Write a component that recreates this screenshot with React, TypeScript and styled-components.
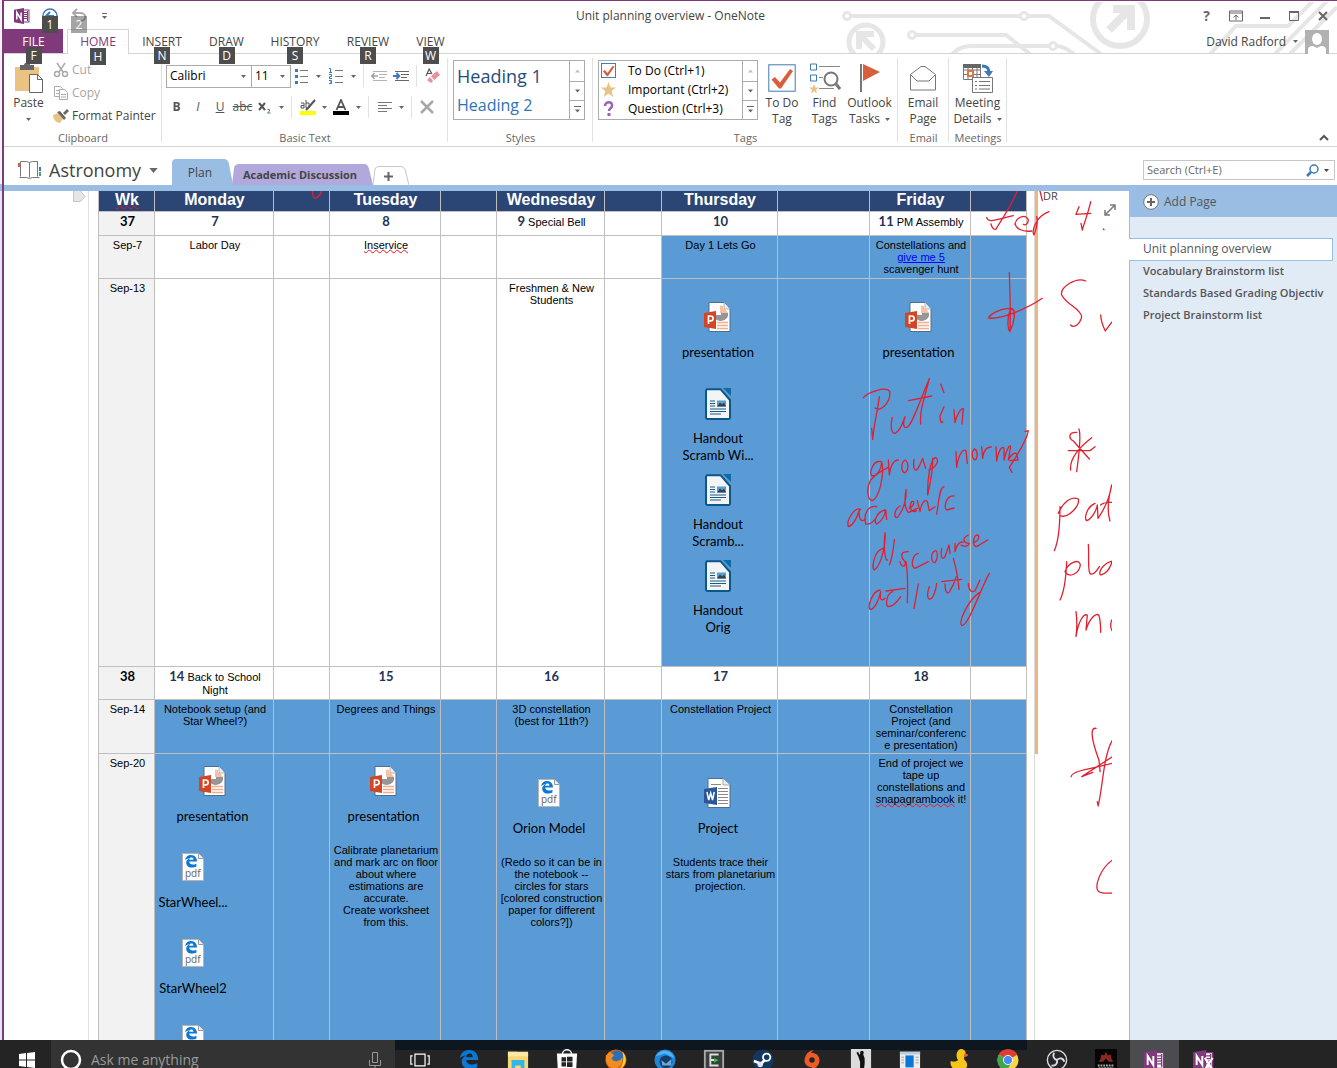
import React from "react";
import styled, { createGlobalStyle, css } from "styled-components";

const UI = '"Open Sans", "Noto Sans", sans-serif';
const DOC = '"Liberation Sans", Arial, sans-serif';
const NOTE = 'Lato, "Open Sans", sans-serif';
const BLUE = "#9abde3";
const PURPLE = "#80397b";

const GlobalStyle = createGlobalStyle`
  * { box-sizing: border-box; }
  body { margin: 0; overflow: hidden; background: #fff; }
  button, input, select { font: inherit; color: inherit; margin: 0; padding: 0; border: 0; background: none; }
  svg { display: block; flex: none; }
`;

const Screen = styled.div`
  display: flex;
  flex-direction: column;
  height: 100vh;
  font: 12px/16px ${UI};
  color: #444;
`;
const Desktop = styled.div`
  flex: 1;
  min-height: 0;
  display: flex;
`;
const BehindStrip = styled.div`
  width: 2px;
  background: linear-gradient(#f3f3f3 184px, ${BLUE} 184px, ${BLUE} 191px, #dfe9f5 191px);
`;
const AppWindow = styled.main`
  flex: 1;
  min-width: 0;
  display: flex;
  flex-direction: column;
  background: #fff;
  border-left: 2px solid ${PURPLE};
  border-top: 1px solid ${PURPLE};
`;

/* ---------- header ---------- */
const Header = styled.header`
  position: relative;
  height: 53px;
  border-bottom: 1px solid #d4d4d4;
`;
const Circuit = styled.svg`
  position: absolute;
  right: 0;
  top: 1px;
`;
const TitleBar = styled.div`
  position: relative;
  display: grid;
  grid-template-columns: 1fr auto 1fr;
  align-items: center;
  height: 28px;
  padding-top: 2px;
`;
const QuickAccess = styled.div`
  display: flex;
  align-items: center;
  gap: 11px;
  padding-left: 10px;
`;
const QuickButton = styled.button<{ $w?: number }>`
  position: relative;
  display: grid;
  place-items: center;
  width: ${(p) => p.$w ?? 18}px;
  height: 20px;
`;
const KeyTip = styled.span<{ $faded?: boolean }>`
  position: absolute;
  z-index: 3;
  left: 50%;
  top: 18px;
  width: 16px;
  height: 17px;
  margin-left: -8px;
  background: #4d4d4d;
  color: #fff;
  font-size: 12px;
  line-height: 17px;
  text-align: center;
  opacity: ${(p) => (p.$faded ? 0.5 : 1)};
`;
const QuickTip = styled(KeyTip)`
  top: 10px;
`;
const Title = styled.h1`
  margin: 0;
  font-size: 12px;
  font-weight: 400;
`;
const WindowButtons = styled.div`
  display: flex;
  justify-content: flex-end;
`;
const WindowButton = styled.button`
  display: grid;
  place-items: center;
  width: 29px;
  height: 24px;
  font-size: 14px;
  font-weight: 700;
  color: #666;
`;
const TabRow = styled.div`
  position: relative;
  display: flex;
  height: 25px;
`;
const RibbonTab = styled.button<{ $w: number; $kind?: "file" | "active" }>`
  position: relative;
  width: ${(p) => p.$w}px;
  height: 24px;
  padding-top: 1px;
  text-align: center;
  ${(p) =>
    p.$kind === "file" &&
    css`
      background: ${PURPLE};
      color: #fff;
      margin-right: 4px;
    `}
  ${(p) =>
    p.$kind === "active" &&
    css`
      height: 25px;
      padding-top: 0;
      background: #fff;
      color: ${PURPLE};
      border: 1px solid #d4d4d4;
      border-bottom: 0;
    `}
`;
const Account = styled.button`
  display: flex;
  align-items: center;
  gap: 7px;
  margin-left: auto;
  margin-right: 8px;
`;

/* ---------- ribbon ---------- */
const Ribbon = styled.section`
  display: flex;
  height: 93px;
  border-bottom: 1px solid #d4d4d4;
`;
const Group = styled.div<{ $w: number }>`
  position: relative;
  display: flex;
  flex-direction: column;
  width: ${(p) => p.$w}px;
  &::after {
    content: "";
    position: absolute;
    right: 0;
    top: 4px;
    bottom: 4px;
    width: 1px;
    background: #e1e1e1;
  }
`;
const GroupBody = styled.div<{ $pad?: number }>`
  display: flex;
  height: 76px;
  padding: 4px 0 0 ${(p) => p.$pad ?? 0}px;
`;
const GroupName = styled.div`
  line-height: 16px;
  font-size: 11px;
  text-align: center;
  color: #666;
`;
const BigButton = styled.button<{ $w: number }>`
  display: flex;
  flex-direction: column;
  justify-content: flex-start;
  align-items: center;
  width: ${(p) => p.$w}px;
  padding-top: 2px;
  white-space: nowrap;
`;
const BigIcon = styled.span`
  display: grid;
  place-items: center;
  height: 35px;
`;
const Nowrap = styled.span`
  display: inline-flex;
  align-items: center;
  gap: 5px;
  height: 16px;
`;
const Stack = styled.div`
  display: flex;
  flex-direction: column;
  flex: 1;
`;
const SmallButton = styled.button<{ $off?: boolean }>`
  display: flex;
  align-items: center;
  gap: 3px;
  height: 23px;
  white-space: nowrap;
  color: ${(p) => (p.$off ? "#a6a6a6" : "#444")};
`;
const ToolRow = styled.div<{ $h: number }>`
  display: flex;
  align-items: center;
  height: ${(p) => p.$h}px;
`;
const Combo = styled.label<{ $w: number }>`
  display: flex;
  align-items: center;
  width: ${(p) => p.$w}px;
  height: 23px;
  margin-right: -1px;
  border: 1px solid #ababab;
  padding: 0 5px 0 3px;
  color: #000;
`;
const ComboSelect = styled.select`
  flex: 1;
  min-width: 0;
  appearance: none;
  outline: 0;
`;
const Tool = styled.button<{ $w: number }>`
  display: grid;
  place-items: center;
  width: ${(p) => p.$w}px;
  height: 22px;
  color: #555;
`;
const Rule = styled.span<{ $w: number }>`
  display: grid;
  justify-content: center;
  width: ${(p) => p.$w}px;
  &::after {
    content: "";
    width: 1px;
    height: 22px;
    background: #e1e1e1;
  }
`;
const Gallery = styled.div<{ $w: number }>`
  display: flex;
  width: ${(p) => p.$w}px;
  height: 60px;
  margin-top: 2px;
  border: 1px solid #ababab;
`;
const StyleItem = styled.button<{ $size: number; $ink: string }>`
  height: 29px;
  padding-left: 3px;
  text-align: left;
  font-size: ${(p) => p.$size}px;
  line-height: 26px;
  color: ${(p) => p.$ink};
`;
const TagItem = styled.button`
  display: flex;
  align-items: center;
  gap: 12px;
  height: 19px;
  padding-left: 2px;
  color: #000;
  white-space: nowrap;
`;
const Scroller = styled.div`
  display: grid;
  grid-template-rows: 20px 19px 19px;
  width: 15px;
`;
const ScrollButton = styled.button`
  display: grid;
  place-items: center;
  border-left: 1px solid #ababab;
  & + & {
    border-top: 1px solid #ababab;
  }
`;
const Collapse = styled.button`
  align-self: flex-end;
  margin: 0 8px 4px auto;
`;

/* ---------- notebook bar ---------- */
const NotebookBar = styled.nav`
  display: flex;
  align-items: flex-end;
  height: 38px;
`;
const NotebookButton = styled.button`
  display: flex;
  align-items: center;
  width: 168px;
  height: 30px;
  padding: 0 0 0 14px;
  gap: 8px;
  font-size: 18px;
`;
const SectionTab = styled.button<{ $w: number; $h: number; $bold?: boolean }>`
  position: relative;
  width: ${(p) => p.$w}px;
  height: ${(p) => p.$h}px;
  margin-right: -1px;
  padding-top: 1px;
  padding-right: 5px;
  font-weight: ${(p) => (p.$bold ? 700 : 400)};
  font-size: ${(p) => (p.$bold ? 11 : 12)}px;
  white-space: nowrap;
`;
const TabShape = styled.svg`
  position: absolute;
  left: 0;
  top: 0;
`;
const TabText = styled.span`
  position: relative;
  display: grid;
  place-items: center;
`;
const SearchBox = styled.label`
  display: flex;
  align-items: center;
  gap: 5px;
  width: 192px;
  height: 20px;
  margin: 0 2px 5px auto;
  padding: 0 5px 0 3px;
  border: 1px solid #c6c6c6;
  font-size: 11px;
`;
const TextInput = styled.input`
  flex: 1;
  min-width: 0;
  outline: 0;
  &::placeholder {
    color: #666;
    opacity: 1;
  }
`;
const BlueBar = styled.div`
  height: 6px;
  background: ${BLUE};
`;

/* ---------- note page ---------- */
const Work = styled.div`
  flex: 1;
  min-height: 0;
  display: flex;
`;
const Canvas = styled.section`
  position: relative;
  flex: 1;
  min-width: 0;
  display: flex;
  overflow: hidden;
`;
const Gutter = styled.div`
  display: flex;
  justify-content: flex-end;
  width: 85px;
  padding-right: 2px;
  margin-right: 9px;
  border-right: 1px solid #e1e1e1;
  flex: none;
`;
const Planner = styled.table`
  flex: none;
  align-self: flex-start;
  width: 929px;
  table-layout: fixed;
  border-spacing: 0;
  font: 11px/12px ${DOC};
  color: #000;
  text-align: center;
`;
const Row = styled.tr<{ $h: number }>`
  height: ${(p) => p.$h}px;
`;
const edge = css`
  padding: 3px 0 0 2px;
  vertical-align: top;
  border-right: 1px solid #bfbfbf;
  border-bottom: 1px solid #bfbfbf;
  &:first-child {
    border-left: 1px solid #bfbfbf;
  }
`;
const DayHead = styled.th`
  ${edge}
  padding: 0 0 0 1px;
  background: #2b4675;
  color: #fff;
  font-size: 16px;
  line-height: 17px;
`;
const WeekHead = styled.th`
  ${edge}
  background: #f2f2f2;
  font-weight: 400;
`;
const Cell = styled.td<{ $fill?: boolean }>`
  ${edge}
  background: ${(p) => (p.$fill ? "#5b9bd5" : "#fff")};
  white-space: nowrap;
`;
const DateLine = styled.div`
  line-height: 13px;
`;
const Num = styled.b<{ $week?: boolean }>`
  font: 700 13px/13px ${NOTE};
  color: ${(p) => (p.$week ? "#000" : "#1f3354")};
`;
const Misspelt = styled.span`
  text-decoration: underline wavy #f01020 1px;
  text-decoration-skip-ink: none;
  text-underline-offset: 0;
`;
const DocLink = styled.a`
  color: #0000ff;
`;
const Files = styled.div<{ $lead: number }>`
  display: flex;
  flex-direction: column;
  align-items: center;
  gap: 10px;
  padding-top: ${(p) => p.$lead}px;
  padding-right: 5px;
`;
const FileBox = styled.figure<{ $left?: boolean }>`
  display: flex;
  flex-direction: column;
  align-items: center;
  gap: 10px;
  height: 76px;
  width: 72px;
  margin: 0;
  align-self: ${(p) => (p.$left ? "flex-start" : "center")};
`;
const FileName = styled.figcaption`
  font: 13px/17px ${NOTE};
`;
const Remark = styled.div`
  padding-top: 2px;
`;
const NoteEdge = styled.div`
  flex: none;
  width: 4px;
  margin: 0 5px 0 7px;
  border-left: 1px solid #d9d9d9;
`;
const AuthorBar = styled.div`
  height: 563px;
  background: #f0b682;
`;
const Initials = styled.span`
  font-size: 11px;
  line-height: 10px;
`;
const InkLayer = styled.div`
  position: absolute;
  inset: 0 17px 0 0;
  overflow: hidden;
  pointer-events: none;
`;
const FullPage = styled.button`
  position: absolute;
  right: 13px;
  top: 13px;
`;

/* ---------- page list ---------- */
const Pages = styled.aside`
  display: flex;
  flex-direction: column;
  flex: none;
  width: 208px;
`;
const AddPage = styled.button`
  display: flex;
  align-items: center;
  gap: 5px;
  height: 26px;
  padding: 0 0 4px 14px;
  background: ${BLUE};
  color: #555;
`;
const PageList = styled.div`
  flex: 1;
  display: flex;
  flex-direction: column;
  background: linear-gradient(90deg, ${BLUE} 1px, #e1ebf6 1px);
  padding-top: 21px;
`;
const PageItem = styled.button<{ $on?: boolean }>`
  height: 22px;
  margin-right: 4px;
  padding: 0 0 2px 14px;
  text-align: left;
  white-space: nowrap;
  overflow: hidden;
  color: #555;
  font-size: 11px;
  font-weight: 600;
  ${(p) =>
    p.$on &&
    css`
      height: 23px;
      font-size: 12px;
      font-weight: 400;
      background: #fff;
      border: 1px solid ${BLUE};
      border-left: 0;
    `}
`;

/* ---------- taskbar ---------- */
const Taskbar = styled.footer`
  display: flex;
  flex: none;
  height: 28px;
  overflow: hidden;
  background: #242424;
`;
const TaskStart = styled.button`
  display: grid;
  place-items: center;
  width: 51px;
  height: 40px;
  padding-left: 3px;
`;
const Cortana = styled.label`
  display: flex;
  align-items: center;
  gap: 9px;
  width: 344px;
  height: 40px;
  padding: 0 13px 0 9px;
  background: #333;
  color: #999;
  font-size: 14px;
`;
const CortanaInput = styled(TextInput)`
  &::placeholder {
    color: #9a9a9a;
  }
`;
const TaskIcons = styled.div`
  flex: 1;
  display: flex;
  background: linear-gradient(#0e1620, #0e1620) 0 0 / 632px 10px no-repeat;
`;
const TaskButton = styled.button<{ $on?: boolean }>`
  display: grid;
  place-items: center;
  width: 49px;
  height: 40px;
  background: ${(p) => (p.$on ? "#4a4c4f" : "transparent")};
`;

/* ---------- drawings ---------- */
const Caret = ({ c = "#666", s = 5 }: { c?: string; s?: number }) => (
  <svg width={s} height={Math.ceil(s / 2)} viewBox="0 0 10 6">
    <path d="M0 0H10L5 6Z" fill={c} />
  </svg>
);
const ScrollGlyph = ({ kind }: { kind: number }) => (
  <svg width="7" height="8" viewBox="0 0 7 8">
    {kind === 0 && <path d="M1 5.500h5l-2.500-3z" fill="#c0c0c0" />}
    {kind === 1 && <path d="M1 2.500h5l-2.500 3z" fill="#666" />}
    {kind === 2 && <path d="M0 0h7v1H0zM1 3.500h5l-2.500 3z" fill="#666" />}
  </svg>
);
const GalleryScroll = ({ name }: { name: string }) => (
  <Scroller>
    {["Previous", "Next", "More"].map((t, i) => (
      <ScrollButton key={t} aria-label={`${t} ${name}`}>
        <ScrollGlyph kind={i} />
      </ScrollButton>
    ))}
  </Scroller>
);
const OneNoteLogo = ({ s = 16, cut }: { s?: number; cut?: boolean }) => (
  <svg width={s} height={s} viewBox="0 0 16 16">
    <rect x="8" y="2" width="7" height="12" fill="#fff" stroke={PURPLE} />
    <path d="M10 4.500h3M10 6.500h3M10 8.500h3M10 10.500h3M13.500 3v10" stroke={PURPLE} />
    <path d="M0 1.800L10 0v16L0 14.200z" fill={PURPLE} />
    <path d="M2.800 11.500v-7l4.300 7v-7" fill="none" stroke="#fff" strokeWidth="1.500" />
    {cut && <path d="M9 15l6-9M15 15L9 6" stroke="#fff" strokeWidth="1.500" />}
  </svg>
);
const Check = ({ s }: { s: number }) => (
  <svg width={s} height={s} viewBox="0 0 28 28">
    <rect x=".8" y=".8" width="26.400" height="26.400" fill="#fff" stroke="#3d7ab5" strokeWidth={s > 20 ? 1 : 2} />
    <path d="M3.500 15.500l3.500-2.500 5 5.500L22 5l3 2L13 24.500h-2z" fill="#d85f3e" />
  </svg>
);
const Star = ({ s }: { s: number }) => (
  <svg width={s} height={s} viewBox="0 0 16 16">
    <path d="M8 0l2.200 5.800H16l-4.600 3.800L13 16l-5-3.800L3 16l1.600-6.400L0 5.800h5.800z" fill="#eac282" />
  </svg>
);
const Lines = ({ kind }: { kind: "bullets" | "numbers" | "out" | "in" | "align" }) => (
  <svg width="16" height="16" viewBox="0 0 16 16" fill="none" stroke="#777">
    {kind === "bullets" && (
      <>
        <path d="M6 2.500h8M6 8.500h8M6 14.500h8" />
        <path d="M1 2.500h3M1 8.500h3M1 14.500h3" stroke="#3d7ab5" strokeWidth="3" />
      </>
    )}
    {kind === "numbers" && (
      <>
        <path d="M7 2.500h8M7 8.500h8M7 14.500h8" />
        <path d="M1 .5h1.500v4M1 4.500h3M1 6.500h2.500v2H1.500v2H4M1 12.500h2.500v3H1M2 14h1.500" stroke="#3d7ab5" />
      </>
    )}
    {kind === "align" && <path d="M1 3.500h14M1 6.500h9M1 9.500h14M1 12.500h9" />}
    {(kind === "out" || kind === "in") && (
      <>
        <path
          d="M2 3.500h14M8 6.500h8M8 9.500h6M2 12.500h14"
          stroke={kind === "out" ? "#b5b5b5" : "#666"}
        />
        {kind === "out" ? (
          <path d="M7 8H1M3.500 5L.8 8l2.700 3" stroke="#a0a0a0" strokeWidth="1.500" />
        ) : (
          <path d="M0 8h6M3.500 5L6.200 8l-2.700 3" stroke="#3d7ab5" strokeWidth="2" />
        )}
      </>
    )}
  </svg>
);

const PptFile = () => (
  <svg width="28" height="32" viewBox="0 0 28 32">
    <path d="M5 .5h15l6 6.500v22.500H5z" fill="#fff" stroke="#4f6f90" />
    <path d="M20 .5V7h6" fill="#eee" stroke="#9a9a9a" strokeWidth=".7" />
    <path d="M17 5v8h-8a8 8 0 0 0 14 3c2-3 1-5 0-6h-6z" fill="#969696" />
    <path d="M16 3.500v7.500h7c0-2-1-3-2-4h-2V4z" fill="#f7bfa3" />
    <path d="M13 20.500h11M13 23.500h11M13 26.500h11" stroke="#f2ad8c" strokeWidth="1.500" />
    <path d="M0 11l12-2v18L0 25z" fill="#d24625" />
    <path d="M4.500 22v-8h2c3.500 0 3.500 4.800 0 4.800h-1" fill="none" stroke="#fff" strokeWidth="1.700" />
  </svg>
);
const WordFile = () => (
  <svg width="28" height="32" viewBox="0 0 28 32">
    <path d="M4 .5h15l7 6.500v22.500H4z" fill="#fff" stroke="#4f6f90" />
    <path d="M19 .5V7h7" fill="#eee" stroke="#888" strokeWidth=".7" />
    <path d="M7 6.500h10M14 10.500h10M14 13.500h10M14 16.500h10M14 19.500h10M14 22.500h10M14 25.500h10" stroke="#8a8a8a" />
    <path d="M0 11l13-2v18L0 25z" fill="#2b5797" />
    <path d="M3 14l1.700 8 2-7 1.800 7 1.700-8" fill="none" stroke="#fff" strokeWidth="1.500" />
  </svg>
);
const WriterFile = () => (
  <svg width="28" height="32" viewBox="0 0 28 32">
    <path d="M19 0h8v8z" fill="#0d6ba8" />
    <path d="M3 1.200h13.500L26 12v17.500a1.500 1.500 0 0 1-1.500 1.500h-21A1.500 1.500 0 0 1 2 29.500v-27z" fill="#f2f4f5" stroke="#0c5688" strokeWidth="2" />
    <path d="M6 13h5M6 15.500h5M6 18h5M6 21h16M6 23.500h16M6 26h11" stroke="#1b5a87" strokeWidth="1.200" />
    <path d="M13 12.500h9v6h-9z" fill="#5b9fd0" />
    <path d="M13 18.500l3-4 2 2 2-2 2 4z" fill="#2c4250" />
  </svg>
);
const EdgeE = () => (
  <path d="M0 9C1 3 5 0 10 0c7 0 10 5 10 11H7c0 3 3 5 6 5 2 0 4-.500 6-1.500V19c-2 1-5 2-8 2-6 0-9-4-9-8 0-3 2-6 5-7C4 6 2 7 0 9zm7-1h7c0-3-1-4-3-4S7 5 7 8z" fill="#0b78d4" />
);
const PdfText = styled.text`
  font: 10px ${UI};
  fill: #666;
`;
const PdfFile = () => (
  <svg width="24" height="32" viewBox="0 0 24 32">
    <path d="M1.500 1.500h16l5 5v22h-21z" fill="#fdfdfd" stroke="#b5b5b5" />
    <path d="M17.500 1.500v5h5" fill="#eee" stroke="#999" />
    <g transform="translate(4 3) scale(.6)">
      <EdgeE />
    </g>
    <PdfText x="4" y="25">pdf</PdfText>
  </svg>
);
const fileIcon = { ppt: PptFile, word: WordFile, writer: WriterFile, pdf: PdfFile };
const File = ({ kind, name, left }: { kind: keyof typeof fileIcon; name: string[]; left?: boolean }) => {
  const Icon = fileIcon[kind];
  return (
    <FileBox $left={left}>
      <Icon />
      <FileName>
        {name.map((n) => (
          <div key={n}>{n}</div>
        ))}
      </FileName>
    </FileBox>
  );
};
const Text = ({ lines }: { lines: string[] }) => (
  <>
    {lines.map((l) => (
      <div key={l}>{l}</div>
    ))}
  </>
);

/* ink strokes, grouped by the area of the page that they were written on */
const ink = [
  {
    t: "translate(90 185) scale(.33333)",
    d: "M667 20C668 35 672 42 680 38C690 32 694 22 695 18",
  },
  {
    t: "translate(640 380) scale(.33333)",
    d: `M670 53C685 35 740 18 749 35C753 60 728 97 705 84M718 50C712 100 702 130 698 178L695 145
    M757 112C750 140 755 162 765 160C785 150 790 120 795 110C788 130 790 145 800 142C815 140 840 60 868-4C855 50 838 90 842 132M806 62L875 48
    M912 80L900 108C900 125 905 132 908 125M902 12L912 38M942 90L945 128C950 105 962 85 970 85L966 132
    M722 245C700 240 688 275 695 287C712 290 725 265 725 245C735 290 715 355 697 362C680 360 680 320 692 300C705 285 728 270 745 262
    M745 240L748 285C750 260 760 240 775 240M795 240C780 250 785 280 795 278C808 270 805 245 795 240M822 238C818 265 825 275 832 268C842 255 845 240 848 235L857 265
    M878 235C880 270 870 310 863 345C862 300 870 240 885 233C900 235 892 262 866 270
    M948 215L950 262C955 225 968 205 978 212L982 250M1003 207C990 220 1000 245 1008 238C1015 225 1010 207 1003 207M1025 200L1028 235C1030 215 1038 200 1054 201
    M1068 200L1070 243C1075 215 1085 195 1092 205L1092 240C1098 215 1108 190 1112 200L1105 240C1115 222 1125 215 1130 222L1134 240L1110 242M1155 155L1165 152C1160 185 1125 235 1108 262L1116 277
    M662 388C645 380 618 420 625 440C645 435 655 400 658 390C655 410 660 430 677 418
    M710 380C690 375 668 395 677 432C690 435 700 425 708 415M735 390C710 395 700 425 710 432C725 425 735 405 737 390L740 418
    M780 378C760 390 762 418 772 412C790 390 800 360 798 328C792 370 795 385 805 398L832 385M808 385C825 375 825 360 815 365C805 385 815 400 830 392M832 362L840 395C843 370 855 355 862 365L868 392L885 380
    M912 320C898 322 896 370 890 402M942 348C918 345 910 385 920 390L942 384
    M728 505C700 515 695 565 703 570C725 555 738 490 735 458C730 500 735 545 742 540M763 478C760 510 755 540 748 555
    M805 515C775 515 785 535 795 545C800 560 785 565 780 545M835 520C815 525 812 560 825 565L865 545M888 512C870 515 872 550 885 548C895 535 893 518 888 512M905 505C900 535 908 540 915 530L927 495L930 520
    M945 490L945 515C948 500 958 482 970 487M985 465C965 475 970 490 988 490C985 500 972 500 963 495M1000 488C1020 480 1020 465 1010 465C998 470 998 500 1010 500L1043 480
    M720 630C695 635 683 680 690 688C705 690 720 650 722 635C718 660 725 665 735 655M758 635C740 640 735 675 745 680C755 680 770 668 782 650M798 545C805 590 803 630 802 668M738 633L795 625
    M835 612L822 685M868 620C860 640 862 660 870 657C880 655 888 630 890 610M915 612C915 640 925 645 930 632C945 610 945 600 948 590M940 535C950 570 955 600 957 628M905 605L965 598
    M985 610C985 630 995 640 1005 632L1020 600M1048 580C1020 630 985 740 965 736C955 725 985 660 1018 638`,
  },
  {
    t: "translate(980 185) scale(.33333)",
    d: `M112 18C95 60 65 105 47 133C40 135 35 125 33 117M20 98C25 115 45 105 100 92M105 118C108 95 140 85 145 105C145 118 135 122 130 118M105 115C108 130 125 142 155 138
    M170 95C177 115 165 140 162 150C155 140 165 95 207 80M180 18L187 47M297 65L288 88L332 85M332 50C325 85 310 120 307 135L303 115M370 132l2 2
    M88 262C90 320 92 400 90 440C80 430 83 380 95 370C108 375 105 410 90 438M187 340C140 372 60 405 26 399C28 388 60 372 80 371C100 370 107 380 102 390
    M317 288C290 275 240 305 245 330C260 360 302 370 305 395C300 420 280 430 272 420M362 390C363 410 372 430 376 438C385 425 392 415 397 410
    M297 732C305 760 295 820 290 860M290 742C265 740 265 760 280 768L328 822M335 758C300 785 268 820 272 855M265 797L330 797L345 785
    M240 965C240 1010 235 1070 223 1097M235 985C250 950 275 932 295 942C300 962 265 1002 240 992M345 955C320 965 312 1000 320 1007C335 1002 350 975 352 960L354 1000C375 970 390 930 395 900C385 940 380 980 390 1008M362 960C370 950 390 952 397 952
    M260 1130C258 1180 250 1225 240 1245M255 1160C265 1130 300 1120 301 1140C298 1165 270 1180 256 1162M325 1078C328 1110 322 1150 330 1166C340 1172 352 1155 358 1145M397 1128C370 1133 352 1165 362 1170C380 1167 392 1145 397 1128
    M288 1280C292 1310 290 1340 288 1354C295 1310 310 1285 322 1290L318 1335C328 1300 350 1280 357 1292C362 1310 362 1330 362 1342M395 1305C390 1320 392 1330 396 1337`,
  },
  {
    t: "translate(490 660) scale(.40867 .33333)",
    d: `M1483 205C1465 200 1475 250 1490 300L1493 335M1523 240C1500 290 1500 380 1488 438L1486 425M1422 350C1425 330 1480 325 1523 310M1448 350L1523 290M1448 350L1475 337
    M1523 600C1490 630 1480 680 1488 693C1495 702 1510 700 1523 699`,
  },
];
const InkStroke = styled.path`
  fill: none;
  stroke: #e02030;
  stroke-width: 1.3px;
  vector-effect: non-scaling-stroke;
  stroke-linecap: round;
  stroke-linejoin: round;
`;

const tabs: [string, string, number][] = [
  ["INSERT", "N", 66],
  ["DRAW", "D", 63],
  ["HISTORY", "S", 74],
  ["REVIEW", "R", 72],
  ["VIEW", "W", 53],
];
const columns = [57, 119, 56, 111, 56, 108, 57, 116, 92, 101, 56];
const days = ["Wk", "Monday", "", "Tuesday", "", "Wednesday", "", "Thursday", "", "Friday", ""];

type Entry = React.ReactNode;
const PlanRow = ({ h, week, cells, fill }: { h: number; week: Entry; cells: Entry[]; fill: number }) => (
  <Row $h={h}>
    <WeekHead scope="row">{week}</WeekHead>
    {cells.flatMap((c, i) => [
      <Cell key={`d${i}`} $fill={i >= fill}>{c}</Cell>,
      <Cell key={`n${i}`} $fill={i >= fill} />,
    ])}
  </Row>
);
const Day = ({ n, note, more }: { n: number; note?: string; more?: string }) => (
  <DateLine>
    <Num>{n}</Num> {note}
    {more && <div>{more}</div>}
  </DateLine>
);

const taskIcons: [string, React.ReactNode][] = [
  ["Task View", <path d="M6.500 5.500h11v13h-11zM4 7.500H2v9h2M20 7.500h2v9h-2" fill="none" stroke="#fff" strokeWidth="1.300" />],
  ["Edge", <g transform="translate(2 1)"><EdgeE /></g>],
  ["File Explorer", <><path d="M1 3h10l1 2h11v18H1z" fill="#f8d775" /><path d="M1 3h22v5H1z" fill="#fbe8a4" /><path d="M5 23V12h14v11h-4v-5H9v5z" fill="#35b4e8" /></>],
  ["Store", <><path d="M7 6c0-7 10-7 10 0" fill="none" stroke="#fff" strokeWidth="1.500" /><path d="M1 5h22l-1 18H2z" fill="#fff" /><path d="M6 9h5v4.500H6zM12 8.500h6v5h-6zM6 14.500h5V19H6zM12 14.500h6v5h-6z" fill="#242424" /></>],
  ["Firefox", <><circle cx="12" cy="12" r="11.500" fill="#e66000" /><circle cx="13" cy="9" r="7.500" fill="#2c6fb7" /><path d="M1 7c2-1 3-4 4-4 1 2 4 2 5 4l-3 3c2 5 9 4 12-1 1 6-3 12-9 12S0 15 1 7z" fill="#f38b1e" /><path d="M19 3c6 6 4 16-3 19 4-6 5-12 3-19z" fill="#ffd23c" /></>],
  ["Thunderbird", <><circle cx="12" cy="12" r="11.500" fill="#1f86d8" /><path d="M2 8C6-1 20 0 22 10L12 5z" fill="#4fb3f5" /><circle cx="13" cy="14" r="7" fill="#143c6b" /><path d="M8 12l5 4 6-5v7H9z" fill="#6fa8d8" /></>],
  ["Capture", <><rect x="2" y="2" width="20" height="20" fill="#3a3f3c" stroke="#aaa" strokeWidth="2" /><path d="M17 6H8v12h9M8 12h6" fill="none" stroke="#ddd" strokeWidth="2" /><path d="M12 10l5 2-5 3z" fill="#2cc840" /></>],
  ["Steam", <><circle cx="12" cy="12" r="11.500" fill="#14375f" /><circle cx="16" cy="9" r="4" fill="none" stroke="#fff" strokeWidth="2" /><path d="M2 13l8 3 4-4" fill="none" stroke="#fff" strokeWidth="3" /><circle cx="9" cy="17" r="3" fill="#dde6ef" /></>],
  ["Origin", <><path d="M14 1l-3 3c6 0 10 4 9 10-1 5-5 8-10 9l2-3c-5 0-9-4-8-9 1-6 5-9 10-10z" fill="#ee5a28" /><circle cx="12" cy="12" r="3" fill="#242424" /></>],
  ["Agent", <><rect x="1" y="0" width="22" height="24" fill="#dcdcdc" /><path d="M10 6l2-1h2l2 5v6l-1 8h-4V14L9 8 7 4l2-1z" fill="#111" /><circle cx="13" cy="4" r="2" fill="#111" /></>],
  ["Window", <><rect x="1" y="3" width="22" height="19" fill="#eee" /><rect x="1" y="3" width="22" height="3" fill="#bcd" /><rect x="7" y="7" width="9" height="13" fill="#0878d8" /><path d="M2.500 9h3M2.500 12h3M2.500 15h3M18 9h3.500M18 12h3.500M18 15h3.500" stroke="#999" /></>],
  ["Duck", <><path d="M3 13c3 1 6 1 8-1-3-3-2-11 3-12 4 0 6 3 5 6-1 2-2 4-1 6 4 3 4 9-1 11H8c-4-2-6-6-5-10z" fill="#f5c518" /><path d="M18 5l4 1-1 2-4 1z" fill="#e8632b" /></>],
  ["Chrome", <><circle cx="12" cy="12" r="11.500" fill="#f9d648" /><path d="M12 12L2 6.200a11.500 11.500 0 0 1 20 0z" fill="#df3e34" /><path d="M12 12L2 6.200A11.500 11.500 0 0 0 11 23.500l5-9.500z" fill="#42a64b" /><circle cx="12" cy="12" r="5" fill="#4a8af4" stroke="#fff" /></>],
  ["OBS", <><circle cx="12" cy="12" r="10.500" fill="#26252b" stroke="#ddd" strokeWidth="1.500" /><path d="M12 12c-4-1-5-5-3-8M12 12c3-3 7-2 8 2M12 12c1 4-2 7-6 6" fill="none" stroke="#ddd" strokeWidth="2" /></>],
  ["Game", <><rect width="24" height="24" fill="#050505" /><path d="M12 3l2 4 3-1 1 5 2 3h-5l-3-4-3 4H4l2-3 1-5 3 1z" fill="#8c2a20" /><path d="M3 18h18M4 21h16" stroke="#aaa" strokeWidth="2" strokeDasharray="2 1" /></>],
  ["OneNote", null],
  ["Screen Clipper", null],
];

export default function App() {
  return (
    <Screen>
      <GlobalStyle />
      <Desktop>
        <BehindStrip />
        <AppWindow>
          <Header>
            <Circuit width="497" height="51" viewBox="840 2 497 51" fill="none" stroke="#e6e6e6" strokeWidth="4">
              <circle cx="847" cy="16" r="3.500" strokeWidth="3" />
              <path d="M851 16h170M1027 16h22l52 38M916 35h90l24 19M951 55c8-8 14-9 22-9h78M1056 46c8 0 12 4 18 8" />
              <circle cx="912" cy="35" r="3.500" strokeWidth="3" />
              <circle cx="1024" cy="16" r="3.500" strokeWidth="3" />
              <circle cx="1053" cy="46" r="3.500" strokeWidth="3" />
              <circle cx="866" cy="42" r="17" strokeWidth="5" />
              <path d="M874 49l-15-15M859 49V34h15" strokeWidth="6" />
              <circle cx="1120" cy="19" r="27" strokeWidth="6" />
              <path d="M1109 30l20-20M1113 9h18v21" strokeWidth="8" />
              <path d="M1210 54l26-28h52l26-26M1275 54l53-54M1290 54l47-47" />
            </Circuit>
            <TitleBar>
              <QuickAccess>
                <OneNoteLogo />
                <QuickButton aria-label="Back">
                  <svg width="16" height="16" viewBox="0 0 16 16" fill="none" stroke="#3d7ab5" strokeWidth="1.500">
                    <circle cx="8" cy="8" r="7" />
                    <path d="M12 8H4M8 4L4 8l4 4" strokeWidth="2" />
                  </svg>
                  <QuickTip>1</QuickTip>
                </QuickButton>
                <QuickButton aria-label="Undo">
                  <svg width="16" height="16" viewBox="0 0 16 16" fill="none" stroke="#aaa" strokeWidth="2">
                    <path d="M6 1L2 5l4 4M2 5h7c7 0 7 8 0 8" />
                  </svg>
                  <QuickTip $faded>2</QuickTip>
                </QuickButton>
                <QuickButton $w={10} aria-label="Customize Quick Access Toolbar">
                  <svg width="7" height="8" viewBox="0 0 7 8">
                    <path d="M1 1h5v1H1zM1 4h5l-2.500 3z" fill="#666" />
                  </svg>
                </QuickButton>
              </QuickAccess>
              <Title>Unit planning overview - OneNote</Title>
              <WindowButtons>
                <WindowButton aria-label="Help">?</WindowButton>
                <WindowButton aria-label="Ribbon display">
                  <svg width="14" height="12" viewBox="0 0 14 12" fill="none" stroke="#666">
                    <path d="M.5 1h13v10H.5zM.5 3h13M7 10V5M4.500 7.500L7 5l2.500 2.500" />
                  </svg>
                </WindowButton>
                <WindowButton aria-label="Minimize">
                  <svg width="10" height="12"><path d="M0 7h10v2H0z" fill="#666" /></svg>
                </WindowButton>
                <WindowButton aria-label="Maximize">
                  <svg width="10" height="10" fill="none" stroke="#666"><path d="M.5 1.500h9v8h-9z" /><path d="M0 1h10" strokeWidth="2" /></svg>
                </WindowButton>
                <WindowButton aria-label="Close">
                  <svg width="10" height="10"><path d="M1 1l8 8M9 1L1 9" stroke="#666" strokeWidth="2" /></svg>
                </WindowButton>
              </WindowButtons>
            </TitleBar>
            <TabRow>
              <RibbonTab $w={59} $kind="file">FILE<KeyTip>F</KeyTip></RibbonTab>
              <RibbonTab $w={62} $kind="active">HOME<KeyTip>H</KeyTip></RibbonTab>
              {tabs.map(([t, k, w]) => (
                <RibbonTab key={t} $w={w}>{t}<KeyTip>{k}</KeyTip></RibbonTab>
              ))}
              <Account>
                David Radford
                <Caret />
                <svg width="24" height="24" viewBox="0 0 24 24">
                  <rect width="24" height="24" fill="#b1b1b1" />
                  <ellipse cx="12" cy="9" rx="5" ry="6" fill="#fff" />
                  <path d="M3 24v-4c0-3 2-4 5-4l4 2 4-2c3 0 5 1 5 4v4z" fill="#fff" />
                </svg>
              </Account>
            </TabRow>
          </Header>

          <Ribbon>
            <Group $w={158}>
              <GroupBody>
                <BigButton $w={49}>
                  <BigIcon>
                    <svg width="28" height="30" viewBox="0 0 28 30">
                      <path d="M0 4h24v24H0z" fill="#eac282" />
                      <path d="M5 2h4c0-3 6-3 6 0h4v5H5z" fill="#666" />
                      <path d="M14.500 11.500h8l5 5v13h-13z" fill="#fff" stroke="#666" />
                      <path d="M22.500 11.500v5h5" fill="none" stroke="#666" />
                    </svg>
                  </BigIcon>
                  <span>Paste</span>
                  <Nowrap><Caret /></Nowrap>
                </BigButton>
                <Stack>
                  <SmallButton $off>
                    <svg width="16" height="16" viewBox="0 0 16 16" fill="none" stroke="#aaa" strokeWidth="1.500">
                      <path d="M4 1l6 9M12 1L6 10" /><circle cx="4" cy="12" r="2.500" /><circle cx="12" cy="12" r="2.500" />
                    </svg>
                    Cut
                  </SmallButton>
                  <SmallButton $off>
                    <svg width="16" height="16" viewBox="0 0 16 16" fill="#fff" stroke="#b0a8b5">
                      <path d="M1.500 1.500h6l2 2v8h-8zM3 5.500h4M3 8.500h4" /><path d="M6.500 4.500h5l3 3v7h-8zM8 9.500h5M8 12h5" />
                    </svg>
                    Copy
                  </SmallButton>
                  <SmallButton>
                    <svg width="16" height="16" viewBox="0 0 16 16">
                      <path d="M0 7l5-2 5 6-3 4c-4 0-7-4-7-8z" fill="#eac282" />
                      <path d="M4 4l3-1 6 7-2 2zM10 5l4-4 2 2-4 4z" fill="#666" />
                    </svg>
                    Format Painter
                  </SmallButton>
                </Stack>
              </GroupBody>
              <GroupName>Clipboard</GroupName>
            </Group>

            <Group $w={286}>
              <GroupBody $pad={4}>
                <Stack>
                  <ToolRow $h={36}>
                    <Combo $w={86}>
                      <ComboSelect aria-label="Font"><option>Calibri</option></ComboSelect>
                      <Caret />
                    </Combo>
                    <Combo $w={40}>
                      <ComboSelect aria-label="Font size"><option>11</option></ComboSelect>
                      <Caret />
                    </Combo>
                    <Tool $w={23} aria-label="Bullets"><Lines kind="bullets" /></Tool>
                    <Tool $w={10} aria-label="Bullet styles"><Caret /></Tool>
                    <Tool $w={25} aria-label="Numbering"><Lines kind="numbers" /></Tool>
                    <Tool $w={10} aria-label="Number styles"><Caret /></Tool>
                    <Rule $w={10} />
                    <Tool $w={22} aria-label="Decrease indent"><Lines kind="out" /></Tool>
                    <Tool $w={22} aria-label="Increase indent"><Lines kind="in" /></Tool>
                    <Rule $w={9} />
                    <Tool $w={24} aria-label="Clear formatting">
                      <svg width="16" height="16" viewBox="0 0 16 16">
                        <path d="M1 8l3.200-7L7 6M2.500 5.500H6" fill="none" stroke="#555" strokeWidth="1.200" />
                        <path d="M6 8l6-5 3 4-6 5zM5 9l3 4-2 2-4-3z" fill="#eb8f9c" />
                      </svg>
                    </Tool>
                  </ToolRow>
                  <ToolRow $h={26}>
                    <Tool $w={21} aria-label="Bold"><b>B</b></Tool>
                    <Tool $w={22} aria-label="Italic"><i>I</i></Tool>
                    <Tool $w={22} aria-label="Underline"><u>U</u></Tool>
                    <Tool $w={23} aria-label="Strikethrough"><s>abc</s></Tool>
                    <Tool $w={22} aria-label="Subscript">
                      <svg width="14" height="14" viewBox="0 0 14 14" fill="none">
                        <path d="M1 3l6 7M7 3l-6 7" stroke="#555" strokeWidth="2" />
                        <path d="M9.500 9.500h2v1.500l-2 2h3" stroke="#3d7ab5" />
                      </svg>
                    </Tool>
                    <Tool $w={10} aria-label="Script styles"><Caret /></Tool>
                    <Rule $w={11} />
                    <Tool $w={22} aria-label="Highlight">
                      <svg width="16" height="16" viewBox="0 0 16 16" fill="none" stroke="#555">
                        <path d="M0 12h16v4H0z" fill="#ffff00" stroke="none" />
                        <path d="M1 4h3v5H1V6.500h3M6 1v8h3V4H6" /><path d="M15 1L8 9l-2 2" strokeWidth="2" />
                      </svg>
                    </Tool>
                    <Tool $w={10} aria-label="Highlight colours"><Caret /></Tool>
                    <Tool $w={24} aria-label="Font colour">
                      <svg width="16" height="16" viewBox="0 0 16 16">
                        <path d="M0 12h16v4H0z" fill="#000" /><path d="M3.500 11L8 1l4.500 10M5 8h6" fill="none" stroke="#555" strokeWidth="1.800" />
                      </svg>
                    </Tool>
                    <Tool $w={10} aria-label="Font colours"><Caret /></Tool>
                    <Rule $w={11} />
                    <Tool $w={22} aria-label="Align"><Lines kind="align" /></Tool>
                    <Tool $w={10} aria-label="Alignments"><Caret /></Tool>
                    <Rule $w={10} />
                    <Tool $w={22} aria-label="Delete">
                      <svg width="16" height="14"><path d="M2 1l12 12M14 1L2 13" stroke="#a8a8a8" strokeWidth="2.500" /></svg>
                    </Tool>
                  </ToolRow>
                </Stack>
              </GroupBody>
              <GroupName>Basic Text</GroupName>
            </Group>

            <Group $w={145}>
              <GroupBody $pad={5}>
                <Gallery $w={132}>
                  <Stack>
                    <StyleItem $size={18} $ink="#1f4e79">Heading 1</StyleItem>
                    <StyleItem $size={16} $ink="#2e74b5">Heading 2</StyleItem>
                  </Stack>
                  <GalleryScroll name="styles" />
                </Gallery>
              </GroupBody>
              <GroupName>Styles</GroupName>
            </Group>

            <Group $w={305}>
              <GroupBody $pad={5}>
                <Gallery $w={160}>
                  <Stack>
                    <TagItem><Check s={15} />To Do (Ctrl+1)</TagItem>
                    <TagItem><Star s={15} />Important (Ctrl+2)</TagItem>
                    <TagItem>
                      <svg width="15" height="15" viewBox="0 0 15 15">
                        <path d="M4 5c0-5 8-5 7 0 0 2-3 2-3 5" fill="none" stroke="#9563b8" strokeWidth="2.500" />
                        <path d="M6.500 12h3v3h-3z" fill="#9563b8" />
                      </svg>
                      Question (Ctrl+3)
                    </TagItem>
                  </Stack>
                  <GalleryScroll name="tags" />
                </Gallery>
                <BigButton $w={48}>
                  <BigIcon><Check s={28} /></BigIcon>
                  <span>To Do</span><span>Tag</span>
                </BigButton>
                <BigButton $w={37}>
                  <BigIcon>
                    <svg width="32" height="32" viewBox="0 0 32 32" fill="none">
                      <path d="M1.500 2h6v6h-6zM1.500 13h6v6h-6z" stroke="#3d7ab5" />
                      <path d="M10 4.500h21M10 15.500h4M10 26.500h15" stroke="#888" />
                      <circle cx="22" cy="17" r="6.500" stroke="#777" strokeWidth="2" /><path d="M27 22l4 5" stroke="#777" strokeWidth="3" />
                      <path d="M5 22l1.300 3.500H10l-3 2.300 1 3.700-3-2.200-3 2.200 1-3.700-3-2.300h3.700z" fill="#eac282" />
                    </svg>
                  </BigIcon>
                  <span>Find</span><span>Tags</span>
                </BigButton>
                <BigButton $w={53}>
                  <BigIcon>
                    <svg width="22" height="30" viewBox="0 0 22 30">
                      <path d="M1 1h2v28H1z" fill="#777" /><path d="M4 1l17 8-17 9z" fill="#d85f3e" />
                    </svg>
                  </BigIcon>
                  <span>Outlook</span><Nowrap>Tasks <Caret /></Nowrap>
                </BigButton>
              </GroupBody>
              <GroupName>Tags</GroupName>
            </Group>

            <Group $w={51}>
              <GroupBody>
                <BigButton $w={50}>
                  <BigIcon>
                    <svg width="28" height="28" viewBox="0 0 28 28" fill="#fff" stroke="#777">
                      <path d="M1.500 10.500L12 2.500h4l10.500 8v15.500h-25z" /><path d="M1.500 10.500L8 17h12l6.500-6.500" />
                    </svg>
                  </BigIcon>
                  <span>Email</span><span>Page</span>
                </BigButton>
              </GroupBody>
              <GroupName>Email</GroupName>
            </Group>

            <Group $w={58}>
              <GroupBody>
                <BigButton $w={57}>
                  <BigIcon>
                    <svg width="32" height="30" viewBox="0 0 32 30" fill="none" stroke="#777">
                      <path d="M1.500 2.500h17v14h-17zM1.500 7h17M1.500 11.500h17M6 4v12M10.500 4v12M15 4v12" />
                      <path d="M1 1h18v4H1z" fill="#666" stroke="none" />
                      <path d="M6 8h5v5H6z" stroke="#e0783c" strokeWidth="2" fill="#fff" />
                      <path d="M10.500 14.500h20v15h-20z" fill="#fff" /><path d="M13 18.500h2M17 18.500h11M13 22.500h2M17 22.500h11M13 26h2M17 26h11" />
                      <path d="M20 3c6 0 7 3 7 8" stroke="#3d7ab5" strokeWidth="3" /><path d="M22 8h9l-4 6z" fill="#3d7ab5" stroke="none" />
                    </svg>
                  </BigIcon>
                  <span>Meeting</span><Nowrap>Details <Caret /></Nowrap>
                </BigButton>
              </GroupBody>
              <GroupName>Meetings</GroupName>
            </Group>
            <Collapse aria-label="Collapse the ribbon">
              <svg width="10" height="8"><path d="M1 6l4-4 4 4" fill="none" stroke="#555" strokeWidth="2" /></svg>
            </Collapse>
          </Ribbon>

          <NotebookBar>
            <NotebookButton>
              <svg width="23" height="20" viewBox="0 0 23 20" fill="none" stroke="#777">
                <path d="M2.500 16.500v-15h6l3 1 3-1h5v15M11.500 2.500v15M1.500 17.500h7l3 1 3-1h7" />
                <path d="M1 3v4" stroke="#d85f3e" strokeWidth="2" /><path d="M22 7v4" stroke="#3d7ab5" strokeWidth="2" /><path d="M22 12v4" stroke="#4a9f7d" strokeWidth="2" />
              </svg>
              Astronomy
              <Caret s={9} />
            </NotebookButton>
            <SectionTab $w={61} $h={26}>
              <TabShape width="61" height="26"><path d="M0 26V4q0-4 4-4h48q4 0 5 5l4 21z" fill={BLUE} /></TabShape>
              <TabText>Plan</TabText>
            </SectionTab>
            <SectionTab $w={141} $h={21} $bold>
              <TabShape width="141" height="21"><path d="M0 21L2 4q1-4 5-4h125q4 0 5 5l4 16z" fill="#b1a8dc" /></TabShape>
              <TabText>Academic Discussion</TabText>
            </SectionTab>
            <SectionTab $w={37} $h={19} aria-label="Create a new section">
              <TabShape width="37" height="19"><path d="M1 19L3 3q1-2.500 4-2.500h22q3 0 4 3l4 15.500" fill="#fff" stroke="#c6c6c6" /></TabShape>
              <TabText><svg width="9" height="9"><path d="M4.500 0v9M0 4.500h9" stroke="#666" strokeWidth="2" /></svg></TabText>
            </SectionTab>
            <SearchBox>
              <TextInput aria-label="Search" placeholder="Search (Ctrl+E)" />
              <svg width="13" height="13" viewBox="0 0 13 13" fill="none" stroke="#3d7ab5">
                <circle cx="8" cy="5" r="4" strokeWidth="1.500" /><path d="M5 8l-4 4" strokeWidth="2.500" />
              </svg>
              <Caret c="#444" />
            </SearchBox>
          </NotebookBar>
          <BlueBar />

          <Work>
            <Canvas>
              <Gutter>
                <svg width="13" height="11"><path d="M.5 0v10.500h7L12 5.500 7.500 0" fill="#e6e6e6" stroke="#c6c6c6" /></svg>
              </Gutter>
              <Planner>
                <colgroup>
                  {columns.map((w, i) => (
                    <col key={i} width={w} />
                  ))}
                </colgroup>
                <thead>
                  <Row $h={21}>
                    {days.map((d, i) => (
                      <DayHead key={i} scope="col">{i === 0 ? <Misspelt>{d}</Misspelt> : d}</DayHead>
                    ))}
                  </Row>
                </thead>
                <tbody>
                  <PlanRow h={24} fill={9} week={<Num $week>37</Num>} cells={[
                    <Day n={7} />, <Day n={8} />, <Day n={9} note="Special Bell" />, <Day n={10} />, <Day n={11} note="PM Assembly" />,
                  ]} />
                  <PlanRow h={43} fill={3} week="Sep-7" cells={[
                    "Labor Day",
                    <Misspelt>Inservice</Misspelt>,
                    null,
                    "Day 1 Lets Go",
                    <>Constellations and<br /><DocLink href="#">give me 5</DocLink><br />scavenger hunt</>,
                  ]} />
                  <PlanRow h={388} fill={3} week="Sep-13" cells={[
                    null,
                    null,
                    <Text lines={["Freshmen & New", "Students"]} />,
                    <Files $lead={20}>
                      <File kind="ppt" name={["presentation"]} />
                      <File kind="writer" name={["Handout", "Scramb Wi..."]} />
                      <File kind="writer" name={["Handout", "Scramb..."]} />
                      <File kind="writer" name={["Handout", "Orig"]} />
                    </Files>,
                    <Files $lead={20}><File kind="ppt" name={["presentation"]} /></Files>,
                  ]} />
                  <PlanRow h={33} fill={9} week={<Num $week>38</Num>} cells={[
                    <Day n={14} note="Back to School" more="Night" />, <Day n={15} />, <Day n={16} />, <Day n={17} />, <Day n={18} />,
                  ]} />
                  <PlanRow h={54} fill={0} week="Sep-14" cells={[
                    <Text lines={["Notebook setup (and", "Star Wheel?)"]} />,
                    "Degrees and Things",
                    <Text lines={["3D constellation", "(best for 11th?)"]} />,
                    "Constellation Project",
                    <Text lines={["Constellation", "Project (and", "seminar/conferenc", "e presentation)"]} />,
                  ]} />
                  <PlanRow h={360} fill={0} week="Sep-20" cells={[
                    <Files $lead={9}>
                      <File kind="ppt" name={["presentation"]} />
                      <File kind="pdf" left name={["StarWheel..."]} />
                      <File kind="pdf" left name={["StarWheel2"]} />
                      <File kind="pdf" left name={[]} />
                    </Files>,
                    <>
                      <Files $lead={9}><File kind="ppt" name={["presentation"]} /></Files>
                      <Remark><Text lines={["Calibrate planetarium", "and mark arc on floor", "about where", "estimations are", "accurate.", "Create worksheet", "from this."]} /></Remark>
                    </>,
                    <>
                      <Files $lead={21}><File kind="pdf" name={["Orion Model"]} /></Files>
                      <Remark><Text lines={["(Redo so it can be in", "the notebook --", "circles for stars", "[colored construction", "paper for different", "colors?])"]} /></Remark>
                    </>,
                    <>
                      <Files $lead={21}><File kind="word" name={["Project"]} /></Files>
                      <Remark><Text lines={["Students trace their", "stars from planetarium", "projection."]} /></Remark>
                    </>,
                    <><Text lines={["End of project we", "tape up", "constellations and"]} /><Misspelt>snapagrambook</Misspelt> it!</>,
                  ]} />
                </tbody>
              </Planner>
              <NoteEdge><AuthorBar /></NoteEdge>
              <Initials>DR</Initials>
              <InkLayer aria-hidden="true">
                <svg width="1108" height="849" viewBox="4 191 1108 849">
                  {ink.map((g) => (
                    <g key={g.t} transform={g.t}><InkStroke d={g.d} /></g>
                  ))}
                </svg>
              </InkLayer>
              <FullPage aria-label="Full page view">
                <svg width="12" height="12" viewBox="0 0 12 12" fill="none" stroke="#777" strokeWidth="1.500">
                  <path d="M2 10l8-8M6 1h5v5M1 6v5h5" />
                </svg>
              </FullPage>
            </Canvas>
            <Pages>
              <AddPage>
                <svg width="16" height="16" viewBox="0 0 16 16"><circle cx="8" cy="8" r="7.300" fill="#fff" stroke="#777" /><path d="M8 4v8M4 8h8" stroke="#666" strokeWidth="2" /></svg>
                Add Page
              </AddPage>
              <PageList>
                <PageItem $on>Unit planning overview</PageItem>
                <PageItem>Vocabulary Brainstorm list</PageItem>
                <PageItem>Standards Based Grading Objectiv</PageItem>
                <PageItem>Project Brainstorm list</PageItem>
              </PageList>
            </Pages>
          </Work>
        </AppWindow>
      </Desktop>

      <Taskbar>
        <TaskStart aria-label="Start">
          <svg width="16" height="16" viewBox="0 0 16 16" fill="#fff"><path d="M0 2l7-1v6.500H0zM8 1l8-1v7.500H8zM0 8.500h7V15l-7-1zM8 8.500h8V16l-8-1z" /></svg>
        </TaskStart>
        <Cortana>
          <svg width="22" height="22"><circle cx="11" cy="11" r="9" fill="none" stroke="#fff" strokeWidth="2.500" /></svg>
          <CortanaInput aria-label="Ask me anything" placeholder="Ask me anything" />
          <svg width="15" height="18" viewBox="0 0 15 18" fill="none" stroke="#999"><path d="M5.500 1.500h5v10h-5zM2.500 9v5.500h11V9M8 14.500V18" /></svg>
        </Cortana>
        <TaskIcons>
          {taskIcons.map(([name, art], i) => (
            <TaskButton key={name} aria-label={name} $on={i === 15}>
              {art ? <svg width="22" height="22" viewBox="0 0 24 24">{art}</svg> : <OneNoteLogo s={21} cut={i === 16} />}
            </TaskButton>
          ))}
        </TaskIcons>
      </Taskbar>
    </Screen>
  );
}
